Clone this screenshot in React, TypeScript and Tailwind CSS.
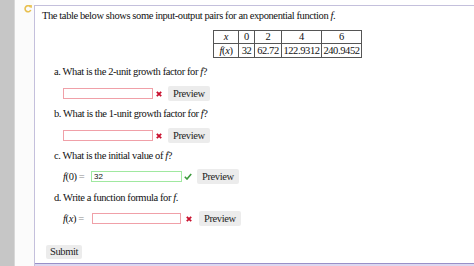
import React from "react";

const F = () => <span className="italic">f</span>;

function XMark() {
  return (
    <svg width="6" height="6" viewBox="0 0 6 6" className="block">
      <path d="M0.8 0.8 L5.2 5.2 M5.2 0.8 L0.8 5.2" stroke="#c8102e" strokeWidth="1.8" />
    </svg>
  );
}

function Check() {
  return (
    <svg width="8" height="7" viewBox="0 0 8 7" className="block">
      <path d="M0.8 3.8 L3 6 L7.2 1" stroke="#3c9a3c" strokeWidth="1.6" fill="none" />
    </svg>
  );
}

function Preview({ className = "" }: { className?: string }) {
  return (
    <button className={"h-[15px] px-[5px] bg-[#ececec] rounded-[2px] text-[10.5px] leading-[15px] text-[#222] " + className}>
      Preview
    </button>
  );
}

export default function App() {
  return (
    <div
      className="w-[474px] h-[266px] flex bg-white overflow-hidden text-[#111] tracking-[-0.4px]"
      style={{ fontFamily: '"Liberation Serif", "Times New Roman", serif' }}
    >
      <div className="w-[15px] bg-[#c6c6c6] border-r border-[#d8d8d8]" />
      <div className="w-[19px] bg-[#fbfbfb] pt-[5px] pl-[9px]">
        <svg width="8" height="8" viewBox="0 0 8 8">
          <path d="M6.5 2 A3 3 0 1 0 6.8 5" stroke="#e8c050" strokeWidth="1.6" fill="none" />
          <path d="M5 0.6 L7.4 0.8 L7 3" stroke="#e8c050" strokeWidth="1.2" fill="none" />
        </svg>
      </div>
      <div className="flex-1 mt-[5px] border-l border-t border-[#c4c0dc] flex flex-col">
        <div className="flex-1 pl-[7px] pt-[4px] text-[10.5px]">
          <div className="leading-[12px]">
            The table below shows some input-output pairs for an exponential function <F />.
          </div>
          <div className="flex mt-[8px] ml-[171px]">
            <table className="border-collapse text-[10.5px] text-center leading-[12px]">
              <tbody>
                <tr>
                  <td className="border border-[#555] w-[25px] h-[13px] italic">x</td>
                  <td className="border border-[#555] w-[16px]">0</td>
                  <td className="border border-[#555] w-[27px]">2</td>
                  <td className="border border-[#555] w-[40px]">4</td>
                  <td className="border border-[#555] w-[40px]">6</td>
                </tr>
                <tr>
                  <td className="border border-[#555] h-[14px]"><span className="italic">f</span>(<span className="italic">x</span>)</td>
                  <td className="border border-[#555]">32</td>
                  <td className="border border-[#555]">62.72</td>
                  <td className="border border-[#555]">122.9312</td>
                  <td className="border border-[#555]">240.9452</td>
                </tr>
              </tbody>
            </table>
          </div>

          <div className="pl-[12px] mt-[8px] leading-[12px]">a. What is the 2-unit growth factor for <F />?</div>
          <div className="flex items-center pl-[21px] mt-[8px] h-[15px]">
            <div className="w-[90px] h-[11px] border border-[#f0a0a8] bg-white" />
            <div className="ml-[3px]"><XMark /></div>
            <Preview className="ml-[6px]" />
          </div>

          <div className="pl-[12px] mt-[7px] leading-[12px]">b. What is the 1-unit growth factor for <F />?</div>
          <div className="flex items-center pl-[21px] mt-[8px] h-[15px]">
            <div className="w-[90px] h-[11px] border border-[#f0a0a8] bg-white" />
            <div className="ml-[3px]"><XMark /></div>
            <Preview className="ml-[6px]" />
          </div>

          <div className="pl-[12px] mt-[7px] leading-[12px]">c. What is the initial value of <F />?</div>
          <div className="flex items-center pl-[21px] mt-[7px] h-[15px]">
            <span className="w-[28px]"><span className="italic">f</span>(0) <span className="text-[#888]">=</span></span>
            <div className="w-[91px] h-[11px] border border-[#a0e8a0] bg-white text-[8px] leading-[9px] pl-[2px] tracking-normal" style={{ fontFamily: '"Liberation Sans", Arial, sans-serif' }}>32</div>
            <div className="ml-[2px]"><Check /></div>
            <Preview className="ml-[5px]" />
          </div>

          <div className="pl-[12px] mt-[8px] leading-[12px]">d. Write a function formula for <F />.</div>
          <div className="flex items-center pl-[21px] mt-[7px] h-[15px]">
            <span className="w-[29px]"><span className="italic">f</span>(<span className="italic">x</span>) <span className="text-[#888]">=</span></span>
            <div className="w-[89px] h-[11px] border border-[#f0a0a8] bg-white" />
            <div className="ml-[5px]"><XMark /></div>
            <Preview className="ml-[7px]" />
          </div>

          <div className="mt-[18px] pl-[4px]">
            <button className="h-[14px] px-[4px] bg-[#ececec] rounded-[2px] text-[10.5px] leading-[14px] text-[#222]">Submit</button>
          </div>
        </div>
        <div className="h-[1px] bg-[#9890c8]" />
        <div className="h-[2px] bg-[#dcd8f0]" />
      </div>
    </div>
  );
}
